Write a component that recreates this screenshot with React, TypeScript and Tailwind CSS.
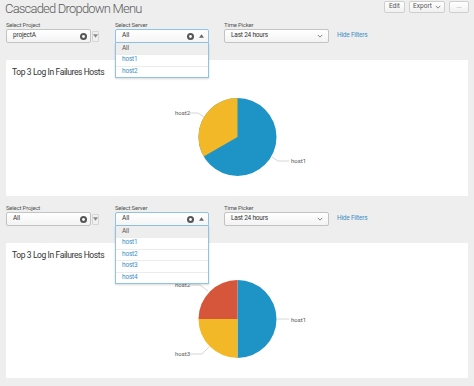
import React from 'react';

const BLUE = '#1e93c6';
const YELLOW = '#f2b827';
const RED = '#d6563c';

function ClearIcon() {
  return (
    <svg width="7" height="7" viewBox="0 0 10 10" className="shrink-0">
      <circle cx="5" cy="5" r="5" fill="#555" />
      <circle cx="5" cy="5" r="2" fill="#fff" />
    </svg>
  );
}

function Caret({ up = false }: { up?: boolean }) {
  return (
    <svg width="5" height="4" viewBox="0 0 6 4" className="shrink-0">
      {up ? <path d="M0 4 L3 0 L6 4 Z" fill="#666" /> : <path d="M0 0 L3 4 L6 0 Z" fill="#888" />}
    </svg>
  );
}

function Chevron() {
  return (
    <svg width="6" height="4" viewBox="0 0 8 5" className="shrink-0">
      <path d="M1 1 L4 4 L7 1" stroke="#777" strokeWidth="1.2" fill="none" />
    </svg>
  );
}

function Filters({ project, hosts }: { project: string; hosts: string[] }) {
  return (
    <div className="relative z-10 flex items-start px-[6px] text-[#333]">
      {/* Select Project */}
      <div className="w-[109px] shrink-0">
        <div className="h-[9px] text-[6px] leading-[9px] tracking-[-0.2px] text-[#555]">Select Project</div>
        <div className="flex items-center">
          <div className="flex h-[14px] w-[85px] items-center justify-between rounded-[2px] border border-[#c3c3c3] bg-gradient-to-b from-white to-[#f3f3f3] pl-[6px] pr-[3px] text-[6.5px] tracking-[-0.2px]">
            <span>{project}</span>
            <ClearIcon />
          </div>
          <div className="ml-[1px] flex h-[11px] w-[7px] items-center justify-center rounded-[1px] border border-[#d6d6d6] bg-[#f0f0f0]">
            <Caret />
          </div>
        </div>
      </div>

      {/* Select Server */}
      <div className="relative w-[109px] shrink-0">
        <div className="h-[9px] text-[6px] leading-[9px] tracking-[-0.2px] text-[#555]">Select Server</div>
        <div className="flex h-[14px] w-[94px] items-center justify-between rounded-t-[2px] border border-[#8fc3e4] bg-gradient-to-b from-white to-[#f5f5f5] pl-[6px] pr-[4px] text-[6.5px]">
          <span>All</span>
          <div className="flex items-center gap-[5px]">
            <ClearIcon />
            <Caret up />
          </div>
        </div>
        <div className="absolute left-0 top-[23px] w-[94px] border border-t-0 border-[#8fc3e4] bg-white text-[6.5px] tracking-[-0.2px] shadow-[0_1px_2px_rgba(0,0,0,0.15)]">
          <div className="flex h-[11px] items-center bg-[#eeeeee] pl-[6px] text-[#555]">All</div>
          {hosts.map((h) => (
            <div key={h} className="flex h-[11.5px] items-center border-t border-[#ececec] pl-[6px] text-[#3a8fc4]">
              {h}
            </div>
          ))}
        </div>
      </div>

      {/* Time Picker */}
      <div className="w-[113px] shrink-0">
        <div className="h-[9px] text-[6px] leading-[9px] tracking-[-0.2px] text-[#555]">Time Picker</div>
        <div className="flex h-[14px] w-[105px] items-center justify-between rounded-[2px] border border-[#c3c3c3] bg-gradient-to-b from-white to-[#f3f3f3] pl-[6px] pr-[5px] text-[6.5px] tracking-[-0.2px]">
          <span>Last 24 hours</span>
          <Chevron />
        </div>
      </div>

      <div className="mt-[9px] flex h-[14px] items-center text-[6.5px] tracking-[-0.2px] text-[#3a8fc4]">Hide Filters</div>
    </div>
  );
}

function Label({ x, y, text }: { x: number; y: number; text: string }) {
  return (
    <text x={x} y={y} fontSize="6" fill="#555" dominantBaseline="middle" fontFamily="Roboto, sans-serif">
      {text}
    </text>
  );
}

function PieOne() {
  const cx = 231.5;
  const cy = 77;
  return (
    <svg className="absolute inset-0" width="463" height="136" viewBox="0 0 463 136">
      <circle cx={cx} cy={cy} r="39" fill={BLUE} />
      <path d={`M${cx} ${cy} L197.7 96.5 A39 39 0 0 1 ${cx} 38 Z`} fill={YELLOW} />
      <path d="M184 53 L192 53 L198 57" stroke="#ccc" strokeWidth="0.8" fill="none" />
      <path d="M266 97 L272 101 L283 101" stroke="#ccc" strokeWidth="0.8" fill="none" />
      <Label x={169} y={53} text="host2" />
      <Label x={285} y={101} text="host1" />
    </svg>
  );
}

function PieTwo() {
  const cx = 231.5;
  const cy = 76;
  return (
    <svg className="absolute inset-0" width="463" height="135" viewBox="0 0 463 135">
      <path d={`M${cx} ${cy} L${cx} 37 A39 39 0 0 1 ${cx} 115 Z`} fill={BLUE} />
      <path d={`M${cx} ${cy} L${cx} 115 A39 39 0 0 1 192.5 ${cy} Z`} fill={YELLOW} />
      <path d={`M${cx} ${cy} L192.5 ${cy} A39 39 0 0 1 ${cx} 37 Z`} fill={RED} />
      <path d="M184 42 L194 42 L202 48" stroke="#ccc" strokeWidth="0.8" fill="none" />
      <path d="M271 76 L283 76" stroke="#ccc" strokeWidth="0.8" fill="none" />
      <path d="M184 111 L196 111 L203 104" stroke="#ccc" strokeWidth="0.8" fill="none" />
      <Label x={169} y={42} text="host2" />
      <Label x={285} y={77} text="host1" />
      <Label x={169} y={111} text="host3" />
    </svg>
  );
}

export default function App() {
  return (
    <div
      className="relative h-[386px] w-[474px] overflow-hidden bg-[#eeeeee]"
      style={{ fontFamily: 'Roboto, "Open Sans", Arial, sans-serif' }}
    >
      {/* Header */}
      <div className="flex h-[20px] items-start justify-between pl-[5px] pr-[5px]">
        <h1 className="pt-[1px] text-[13px] font-light leading-[16px] tracking-[-0.8px] text-[#5c5c5c]">
          Cascaded Dropdown Menu
        </h1>
        <div className="mt-[1px] flex gap-[4px] text-[6.5px] text-[#555]">
          <button className="flex h-[12px] w-[21px] items-center justify-center rounded-[2px] border border-[#cfcfcf] bg-gradient-to-b from-white to-[#f0f0f0]">
            Edit
          </button>
          <button className="flex h-[12px] w-[36px] items-center justify-center gap-[3px] rounded-[2px] border border-[#cfcfcf] bg-gradient-to-b from-white to-[#f0f0f0]">
            Export <Chevron />
          </button>
          <button className="flex h-[12px] w-[20px] items-center justify-center rounded-[2px] border border-[#cfcfcf] bg-gradient-to-b from-white to-[#f0f0f0] text-[#999]">
            ...
          </button>
        </div>
      </div>

      <Filters project="projectA" hosts={['host1', 'host2']} />

      <div className="relative mx-[6px] mt-[17px] h-[136px] bg-white">
        <div className="px-[6px] pt-[6px] text-[8.5px] tracking-[-0.4px] text-[#333]">Top 3 Log In Failures Hosts</div>
        <PieOne />
      </div>

      <div className="pt-[7px]">
        <Filters project="All" hosts={['host1', 'host2', 'host3', 'host4']} />
      </div>

      <div className="relative mx-[6px] mt-[17px] h-[135px] bg-white">
        <div className="px-[6px] pt-[6px] text-[8.5px] tracking-[-0.4px] text-[#333]">Top 3 Log In Failures Hosts</div>
        <PieTwo />
      </div>
    </div>
  );
}
